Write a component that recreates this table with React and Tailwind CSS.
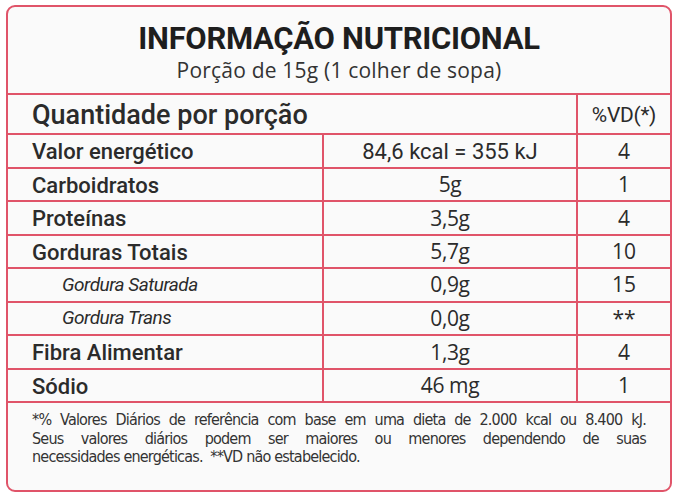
const rows = [
  { label: 'Valor energético', value: '84,6 kcal = 355 kJ', vd: '4', din: true },
  { label: 'Carboidratos', value: '5g', vd: '1' },
  { label: 'Proteínas', value: '3,5g', vd: '4' },
  { label: 'Gorduras Totais', value: '5,7g', vd: '10' },
  { label: 'Gordura Saturada', value: '0,9g', vd: '15', sub: true },
  { label: 'Gordura Trans', value: '0,0g', vd: '**', sub: true },
  { label: 'Fibra Alimentar', value: '1,3g', vd: '4' },
  { label: 'Sódio', value: '46 mg', vd: '1' },
];

const din = { fontFamily: 'Roboto, "Liberation Sans", sans-serif' };
const sans = { fontFamily: '"Open Sans", "Liberation Sans", sans-serif' };
const narrow = { fontFamily: '"DejaVu Sans Condensed", "Liberation Sans Narrow", sans-serif' };

export default function App() {
  return (
    <div className="w-[682px] h-[501px] bg-white pt-[5px] pl-[6px]">
      <div className="w-[666px] h-[487px] border-2 border-[#e05469] rounded-[9px] bg-[#fafafa] flex flex-col text-[#2b2b2b] overflow-hidden">
        <div className="h-[88px] border-b-2 border-[#e05469] flex flex-col items-center pt-[13px]">
          <div style={din} className="text-[31px] leading-[37px] font-bold tracking-[-0.3px] text-[#1e1e1e]">
            INFORMAÇÃO NUTRICIONAL
          </div>
          <div style={sans} className="text-[21px] leading-[27px] tracking-[0.2px] text-[#333]">
            Porção de 15g (1 colher de sopa)
          </div>
        </div>

        <div className="grid grid-cols-[570px_1fr] h-[40px] border-b-2 border-[#e05469]">
          <div style={din} className="border-r-2 border-[#e05469] pl-6 flex items-center text-[27px] font-medium">
            Quantidade por porção
          </div>
          <div style={din} className="flex items-center justify-center text-[21px] tracking-[-0.3px]">
            %VD(*)
          </div>
        </div>

        {rows.map(r => (
          <div key={r.label} className="grid grid-cols-[316px_254px_1fr] h-[33.5px] border-b-2 border-[#e05469] shrink-0">
            <div
              style={din}
              className={
                r.sub
                  ? 'border-r-2 border-[#e05469] pl-[54px] flex items-center text-[19px] italic tracking-[-0.5px]'
                  : 'border-r-2 border-[#e05469] pl-6 flex items-center text-[22px] font-medium'
              }
            >
              {r.label}
            </div>
            <div
              style={r.din ? din : sans}
              className={
                r.din
                  ? 'border-r-2 border-[#e05469] flex items-center justify-center text-[22px]'
                  : 'border-r-2 border-[#e05469] flex items-center justify-center text-[21px] tracking-[-0.4px]'
              }
            >
              {r.value}
            </div>
            <div style={sans} className="flex items-center justify-center text-[21px]">
              {r.vd}
            </div>
          </div>
        ))}

        <div style={narrow} className="flex-1 pl-6 pr-[24px] pt-[8px] text-[16px] leading-[18.7px] tracking-[-0.8px] text-[#333]">
          <div className="text-justify [text-align-last:justify] whitespace-nowrap">
            *% Valores Diários de referência com base em uma dieta de 2.000 kcal ou 8.400 kJ.
          </div>
          <div className="text-justify [text-align-last:justify] whitespace-nowrap">
            Seus valores diários podem ser maiores ou menores dependendo de suas
          </div>
          <div className="whitespace-pre">
            necessidades energéticas.  **VD não estabelecido.
          </div>
        </div>
      </div>
    </div>
  );
}
